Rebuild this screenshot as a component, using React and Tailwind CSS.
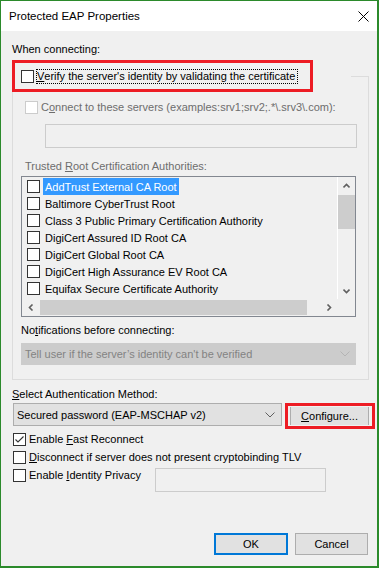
import clsx from 'clsx';

const certs = [
    'AddTrust External CA Root',
    'Baltimore CyberTrust Root',
    'Class 3 Public Primary Certification Authority',
    'DigiCert Assured ID Root CA',
    'DigiCert Global Root CA',
    'DigiCert High Assurance EV Root CA',
    'Equifax Secure Certificate Authority',
];

const Box = ({ checked, disabled }) => (
    <span
        className={clsx(
            'w-[13px] h-[13px] border shrink-0 flex items-center justify-center',
            disabled ? 'border-[#cccccc] bg-white' : 'border-[#333333] bg-white'
        )}
    >
        {checked && (
            <svg width="11" height="11" viewBox="0 0 11 11">
                <polyline points="1.5,5.5 4,8 9.5,2.5" fill="none" stroke="#333333" strokeWidth="1.1" />
            </svg>
        )}
    </span>
);

// small scrollbar arrow
const Arrow = ({ dir }) => {
    const pts = {
        up: '0.5,4.5 3.5,1.5 6.5,4.5',
        down: '0.5,1.5 3.5,4.5 6.5,1.5',
        left: '4.5,0.5 1.5,3.5 4.5,6.5',
        right: '1.5,0.5 4.5,3.5 1.5,6.5',
    }[dir];
    const w = dir === 'up' || dir === 'down' ? 7 : 6;
    const h = dir === 'up' || dir === 'down' ? 6 : 7;
    return (
        <svg width={w} height={h} viewBox={`0 0 ${w} ${h}`}>
            <polyline points={pts} fill="none" stroke="#606060" strokeWidth="1.6" />
        </svg>
    );
};

const ComboChevron = ({ color }) => (
    <svg width="10" height="6" viewBox="0 0 10 6">
        <polyline points="0.5,0.5 5,5 9.5,0.5" fill="none" stroke={color} strokeWidth="1" />
    </svg>
);

const App = () => {
    return (
        <div className="w-[379px] h-[568px] border-l border-t border-r-2 border-b-2 border-[#2b8a2b] flex flex-col bg-[#f0f0f0] font-['Liberation_Sans',Arial,sans-serif] text-[11px] leading-4 text-black overflow-hidden">
            {/* Title bar */}
            <div className="h-[30px] bg-white flex items-center justify-between pl-2 pr-[8px] shrink-0">
                <span className="text-[11.5px]">Protected EAP Properties</span>
                <svg width="11" height="11" viewBox="0 0 11 11">
                    <path d="M0.5 0.5 L10.5 10.5 M10.5 0.5 L0.5 10.5" stroke="#000" strokeWidth="1" />
                </svg>
            </div>

            {/* Body */}
            <div className="flex-1 flex flex-col pl-[11px]">
                <div className="mt-[10px] h-4">When connecting:</div>

                {/* group header */}
                <div className="mt-[3px] w-[339px] h-[32px] relative z-10 bg-[#f0f0f0]">
                    <div className="w-[301px] h-[32px] border-[3px] border-[#ed1c24] flex items-center pl-[6px]">
                        <Box />
                        <span className="ml-[2px] h-[15px] pr-[2px] border border-dotted border-black flex items-center whitespace-nowrap">
                            <u>V</u>erify the server's identity by validating the certificate
                        </span>
                    </div>
                </div>

                {/* group box */}
                <div className="-mt-[16px] w-[357px] h-[304px] border border-[#dcdcdc] flex flex-col shrink-0">
                    <div className="mt-[22px] h-4 ml-[12px] flex items-center text-[#6d6d6d]">
                        <Box disabled />
                        <span className="ml-[3px] whitespace-nowrap">
                            C<u>o</u>nnect to these servers {'(examples:srv1;srv2;.*\\.srv3\\.com):'}
                        </span>
                    </div>
                    <div className="mt-[9px] ml-[32px] w-[312px] h-[24px] border border-[#cccccc] bg-[#f0f0f0]" />
                    <div className="mt-[10px] h-4 ml-[12px] text-[#6d6d6d]">
                        Trusted <u>R</u>oot Certification Authorities:
                    </div>

                    {/* list box */}
                    <div className="mt-[2px] ml-[8px] w-[335px] h-[141px] border border-[#828790] flex flex-col">
                        <div className="flex flex-1 min-h-0">
                            <div className="flex-1 pt-[1px] overflow-hidden">
                                {certs.map((c, i) => (
                                    <div key={c} className="h-[17px] flex items-center pl-[5px] whitespace-nowrap">
                                        <Box />
                                        <span
                                            className={clsx(
                                                'ml-[3px] px-[2px] h-[17px] flex items-center',
                                                i === 0 && 'bg-[#3399ff] text-white'
                                            )}
                                        >
                                            {c}
                                        </span>
                                    </div>
                                ))}
                            </div>
                            <div className="w-[18px] border-l border-white flex flex-col">
                                <div className="h-[17px] flex items-center justify-center">
                                    <Arrow dir="up" />
                                </div>
                                <div className="mt-[1px] h-[34px] bg-[#cdcdcd]" />
                                <div className="flex-1" />
                                <div className="h-[17px] flex items-center justify-center">
                                    <Arrow dir="down" />
                                </div>
                            </div>
                        </div>
                        <div className="h-[17px] flex shrink-0">
                            <div className="w-[17px] flex items-center justify-center">
                                <Arrow dir="left" />
                            </div>
                            <div className="ml-[1px] w-[267px] my-[1px] bg-[#cdcdcd]" />
                            <div className="flex-1" />
                            <div className="w-[17px] flex items-center justify-center">
                                <Arrow dir="right" />
                            </div>
                            <div className="w-[18px]" />
                        </div>
                    </div>

                    <div className="mt-[5px] ml-[8px] h-4">
                        No<u>t</u>ifications before connecting:
                    </div>
                    <div className="mt-[5px] ml-[8px] w-[335px] h-[22px] bg-[#cccccc] border border-[#cccccc] flex items-center justify-between pl-[3px] pr-[5px] text-[#838383]">
                        <span>Tell user if the server’s identity can't be verified</span>
                        <ComboChevron color="#b4b4b4" />
                    </div>
                </div>

                <div className="mt-[6px] h-4">
                    <u>S</u>elect Authentication Method:
                </div>
                <div className="mt-[1px] flex items-start">
                    <div className="ml-[1px] w-[269px] h-[23px] bg-[#e1e1e1] border border-[#adadad] flex items-center justify-between pl-[3px] pr-[6px]">
                        <span>Secured password (EAP-MSCHAP v2)</span>
                        <ComboChevron color="#606060" />
                    </div>
                    <div className="ml-[3px] w-[90px] h-[26px] border-[3px] border-[#ed1c24] pl-[2px] pt-[1px]">
                        <div className="w-[79px] h-[18px] bg-[#e1e1e1] border-x border-[#adadad] flex items-center justify-center">
                            <span>
                                <u>C</u>onfigure...
                            </span>
                        </div>
                    </div>
                </div>

                <div className="mt-[2px] h-4 ml-[1px] flex items-center">
                    <Box checked />
                    <span className="ml-[3px]">
                        Enable <u>F</u>ast Reconnect
                    </span>
                </div>
                <div className="mt-[2px] h-4 ml-[1px] flex items-center">
                    <Box />
                    <span className="ml-[3px]">
                        <u>D</u>isconnect if server does not present cryptobinding TLV
                    </span>
                </div>
                <div className="mt-[2px] ml-[1px] flex items-start">
                    <div className="h-4 flex items-center w-[142px]">
                        <Box />
                        <span className="ml-[3px]">
                            Enable <u>I</u>dentity Privacy
                        </span>
                    </div>
                    <div className="mt-[1px] w-[171px] h-[24px] border border-[#cccccc] bg-[#f0f0f0]" />
                </div>

                <div className="mt-auto mb-[11px] pr-[9px] flex justify-end gap-[7px]">
                    <div className="w-[74px] h-[22px] bg-[#e1e1e1] border-2 border-[#0078d7] flex items-center justify-center">
                        OK
                    </div>
                    <div className="w-[73px] h-[22px] bg-[#e1e1e1] border border-[#adadad] flex items-center justify-center">
                        Cancel
                    </div>
                </div>
            </div>
        </div>
    );
};

export default App;
